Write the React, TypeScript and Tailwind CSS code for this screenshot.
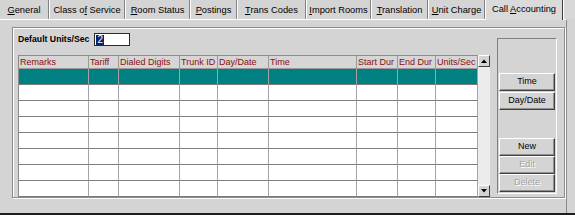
import React from 'react';

type Tab = { label: string; u: number; w: number; active?: boolean };

const tabs: Tab[] = [
  { label: 'General', u: 0, w: 49 },
  { label: 'Class of Service', u: 7, w: 76 },
  { label: 'Room Status', u: 0, w: 65 },
  { label: 'Postings', u: 0, w: 47 },
  { label: 'Trans Codes', u: 0, w: 69 },
  { label: 'Import Rooms', u: 0, w: 65 },
  { label: 'Translation', u: 0, w: 57 },
  { label: 'Unit Charge', u: 0, w: 57 },
  { label: 'Call Accounting', u: 5, w: 78, active: true },
];

const cols = ['Remarks', 'Tariff', 'Dialed Digits', 'Trunk ID', 'Day/Date', 'Time', 'Start Dur', 'End Dur', 'Units/Sec'];

const Mnemonic: React.FC<{ text: string; at: number }> = ({ text, at }) => (
  <>
    {text.slice(0, at)}
    <u className="underline-offset-1">{text[at]}</u>
    {text.slice(at + 1)}
  </>
);

const Btn: React.FC<{ label: string; disabled?: boolean }> = ({ label, disabled }) => (
  <div
    className={`h-[18px] flex items-center justify-center border border-t-white border-l-white border-r-[#404040] border-b-[#404040] shadow-[inset_-1px_-1px_0_#909090] bg-[#d4d4d4] text-[9px] ${
      disabled ? 'text-[#a4a4a4] [text-shadow:1px_1px_0_#fff]' : 'text-black'
    }`}
  >
    {label}
  </div>
);

const Arrow: React.FC<{ down?: boolean }> = ({ down }) => (
  <div className="h-[12px] flex items-center justify-center bg-[#d4d4d4] border border-t-white border-l-white border-r-[#404040] border-b-[#404040]">
    <svg width="6" height="4" viewBox="0 0 6 4">
      {down ? <polygon points="0,0 6,0 3,3.5" fill="#000" /> : <polygon points="0,4 6,4 3,0.5" fill="#000" />}
    </svg>
  </div>
);

export default function App() {
  return (
    <div className="w-[575px] h-[215px] bg-[#d4d4d4] border-b-2 border-[#1e1e1e] overflow-hidden font-['Liberation_Sans',Arial,sans-serif] text-black">
      {/* tab strip */}
      <div className="flex h-[19px]">
        {tabs.map((t, i) => (
          <div
            key={t.label}
            style={{ width: t.w }}
            className={`flex items-center justify-center text-[9.3px] whitespace-nowrap ${
              i > 0 ? 'border-l border-white' : ''
            } ${t.active ? 'h-[20px] bg-[#dadada] border-r border-r-[#3a3a3a] relative z-10' : 'border-r border-r-[#808080] pt-[2px]'}`}
          >
            <span><Mnemonic text={t.label} at={t.u} /></span>
          </div>
        ))}
        <div className="flex-1 border-l border-white bg-[#d8d8d8]" />
      </div>

      {/* tab page */}
      <div className="w-[567px] h-[194px] border-t border-white border-r border-r-[#8a8a8a] pt-[7px] pl-[12px]">
        <div className="w-[553px] h-[171px] border border-[#8c8c8c] shadow-[inset_1px_1px_0_#fff,1px_1px_0_#fff] flex pl-[5px]">
          <div className="flex flex-col">
            <div className="flex items-center mt-[5px] h-[13px]">
              <span className="text-[8.7px] font-bold mr-[5px]">Default Units/Sec</span>
              <div className="w-[36px] h-[13px] bg-white border border-[#2a2a2a] flex items-center pl-[1px]">
                <span className="bg-[#0a246a] text-white text-[10px] leading-[10px] px-[1px]">2</span>
              </div>
            </div>

            <div className="flex mt-[9px]">
              <div className="border-l border-t border-[#8c8c8c]">
                <div className="grid grid-cols-[70px_30px_61px_38px_51px_88px_41px_38px_42px]">
                  {cols.map((c) => (
                    <div
                      key={c}
                      className="h-[13px] bg-[#d6d6d6] border-r border-b border-[#9a9a9a] text-[#8b0f0f] text-[9px] leading-[12px] pl-[1px] whitespace-nowrap overflow-hidden"
                    >
                      {c}
                    </div>
                  ))}
                  {Array.from({ length: 8 }).map((_, r) =>
                    cols.map((c) => (
                      <div
                        key={`${r}-${c}`}
                        className={`h-[16px] border-r border-r-[#a4a4a4] border-b border-b-[#7c7c7c] ${
                          r === 0 ? 'bg-[#008080] border-r-[#6a6a6a]' : 'bg-white'
                        }`}
                      />
                    ))
                  )}
                </div>
              </div>
              <div className="w-[12px] flex flex-col">
                <Arrow />
                <div className="flex-1 bg-[#ececec]" />
                <Arrow down />
              </div>
            </div>
          </div>

          <div className="ml-[7px] mt-[10px] w-[60px] h-[156px] border border-t-[#808080] border-l-[#808080] border-r-white border-b-white p-[1px] flex flex-col">
            <div className="mt-[33px]">
              <Btn label="Time" />
            </div>
            <div className="mt-[1px]">
              <Btn label="Day/Date" />
            </div>
            <div className="mt-auto flex flex-col">
              <Btn label="New" />
              <Btn label="Edit" disabled />
              <Btn label="Delete" disabled />
            </div>
          </div>
        </div>
      </div>
    </div>
  );
}
